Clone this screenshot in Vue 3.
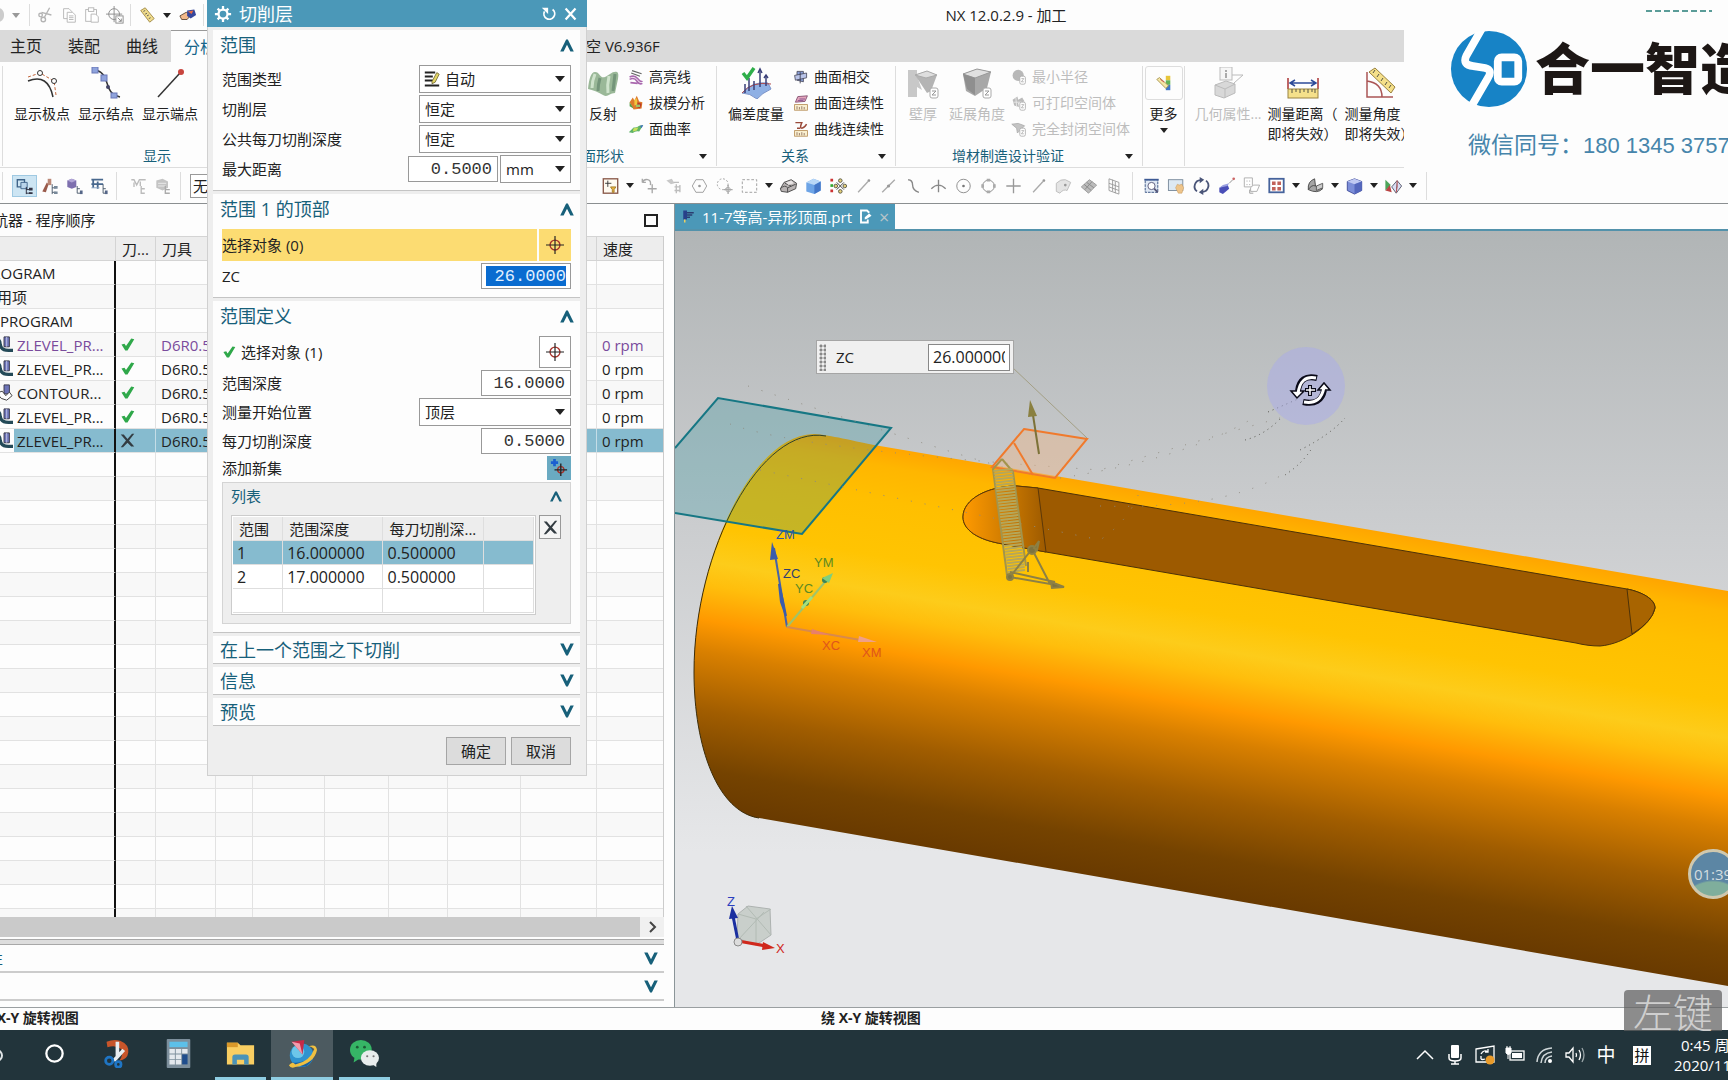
<template>
  <div class="app">
    <!-- 标题栏 -->
    <header class="title-bar">
      <div class="quick-tools">
        <span class="quick-edge"></span>
        <span class="arrow dim"></span>
        <span class="sep"></span>
        <Ic v-for="n in ['cut', 'copy', 'paste', 'snap']" :key="n" :name="n" class="q-icon" />
        <span class="sep"></span>
        <Ic name="ruler" class="q-icon" />
        <span class="arrow"></span>
        <Ic name="eraser" class="q-icon" />
        <span class="sep"></span>
      </div>
      <h1 class="app-title">NX 12.0.2.9 - 加工</h1>
    </header>

    <!-- 选项卡 -->
    <nav class="tabs">
      <button v-for="t in tabs" :key="t" class="tab" :class="{ active: t === '分析' }">{{ t }}</button>
      <button class="tab tab-last">星空 V6.936F</button>
    </nav>

    <!-- 功能区 -->
    <section class="ribbon">
      <div class="group g-show">
        <div class="tools">
          <button v-for="b in showTools" :key="b.label" class="big">
            <Ic :name="b.icon" size="32" />
            <span>{{ b.label }}</span>
          </button>
        </div>
        <div class="caption">显示</div>
      </div>
      <div class="group g-shape">
        <div class="tools tools-end">
          <button class="big big-2"><Ic name="reflect" size="32" /><span>反射</span></button>
          <div class="small-col">
            <button v-for="b in shapeTools" :key="b.label" class="small"><Ic :name="b.icon" />{{ b.label }}</button>
          </div>
        </div>
        <div class="caption cap-end">面形状<span class="arrow"></span></div>
      </div>
      <div class="group g-rel">
        <div class="tools">
          <button class="big big-4"><Ic name="deviation" size="32" /><span>偏差度量</span></button>
          <div class="small-col">
            <button v-for="b in relTools" :key="b.label" class="small"><Ic :name="b.icon" />{{ b.label }}</button>
          </div>
        </div>
        <div class="caption cap-drop">关系<span class="arrow cap-arrow"></span></div>
      </div>
      <div class="group g-add">
        <div class="tools disabled">
          <button class="big big-2" disabled><Ic name="wall" size="32" /><span>壁厚</span></button>
          <button class="big big-4" disabled><Ic name="overhang" size="32" /><span>延展角度</span></button>
          <div class="small-col">
            <button v-for="b in addTools" :key="b.label" class="small" disabled><Ic :name="b.icon" />{{ b.label }}</button>
          </div>
        </div>
        <div class="caption cap-drop">增材制造设计验证<span class="arrow cap-arrow"></span></div>
      </div>
      <div class="group g-more">
        <button class="more">
          <span class="more-box"><Ic name="gauge" /></span>
          <span>更多</span>
          <span class="arrow"></span>
        </button>
      </div>
      <div class="group g-measure">
        <div class="tools">
          <button class="big m-prop" disabled><Ic name="prop" size="32" /><span>几何属性...</span></button>
          <button class="big m-item"><Ic name="dist" size="32" /><span>测量距离（<br>即将失效）</span></button>
          <button class="big m-item"><Ic name="angle" size="32" /><span>测量角度（<br>即将失效）</span></button>
        </div>
      </div>
    </section>

    <!-- 选择条 -->
    <section class="toolbar">
      <div class="bar-left">
        <span class="sep tall"></span>
        <Ic v-for="n in ['nav1', 'nav2', 'nav3', 'nav4']" :key="n" :name="n" class="b-icon" :class="{ on: n === 'nav1' }" />
        <span class="sep tall"></span>
        <Ic v-for="n in ['nav5', 'nav6']" :key="n" :name="n" class="b-icon" />
        <span class="sep tall"></span>
        <select class="filter" aria-label="过滤器"><option>无选择过滤器</option></select>
      </div>
      <div class="bar-right">
        <template v-for="(n, i) in barIcons" :key="i">
          <span v-if="n === '|'" class="sep tall"></span>
          <span v-else-if="n === 'v'" class="drop"><span class="arrow"></span></span>
          <Ic v-else :name="n" class="b-icon" />
        </template>
      </div>
    </section>

    <main class="main">
      <!-- 工序导航器 -->
      <aside class="navigator">
        <div class="nav-title">
          <span class="nav-name">工序导航器 - 程序顺序</span>
          <button class="nav-max" aria-label="最大化"></button>
        </div>
        <div class="nav-table-wrap">
          <table class="nav-table">
            <colgroup>
              <col v-for="(w, i) in navCols" :key="i" :style="{ width: w + 'px' }">
            </colgroup>
            <thead>
              <tr><th></th><th>刀...</th><th>刀具</th><th></th><th></th><th></th><th></th><th></th><th></th><th>速度</th></tr>
            </thead>
            <tbody>
              <tr v-for="(r, i) in navRows" :key="i" :class="{ selected: r.selected, first: r.first }">
                <td class="name">
                  <span v-if="r.op" class="op"><Ic :name="r.op" class="op-icon" /><span class="op-name">{{ r.name }}</span></span>
                  <span v-else-if="r.name" :class="'lv' + r.level">{{ r.name }}</span>
                </td>
                <td class="state"><Ic v-if="r.state" :name="r.state" /></td>
                <td>{{ r.tool }}</td>
                <td></td><td></td><td></td><td></td><td></td><td></td>
                <td>{{ r.speed }}</td>
              </tr>
            </tbody>
          </table>
        </div>
        <div class="h-scroll"><span class="thumb"></span><Ic name="right" class="h-arrow" /></div>
        <div class="splitter"></div>
        <button class="nav-fold"><span class="fold-name">相关性</span><Ic name="down" class="chev" /></button>
        <button class="nav-fold"><span class="fold-name">细节</span><Ic name="down" class="chev" /></button>
      </aside>

      <!-- 图形窗口 -->
      <section class="view">
        <div class="doc-bar">
          <div class="doc-tab">
            <Ic name="doc" /><span>11-7等高-异形顶面.prt</span><Ic name="edit" /><span class="doc-close">×</span>
          </div>
        </div>
        <div class="canvas">
          <svg class="scene" viewBox="675 231 1053 776" preserveAspectRatio="xMinYMin slice">
            <defs>
              <linearGradient id="sky" x1="0" y1="0" x2="0" y2="1">
                <stop offset="0" stop-color="#b1b5b6" /><stop offset=".35" stop-color="#c9cbcd" />
                <stop offset=".8" stop-color="#e6e7e9" /><stop offset="1" stop-color="#e6e7e9" />
              </linearGradient>
              <linearGradient id="body" gradientUnits="userSpaceOnUse" x1="875" y1="445" x2="809" y2="827">
                <stop offset="0" stop-color="#ffa600" /><stop offset=".05" stop-color="#ffb600" />
                <stop offset=".14" stop-color="#ffbf00" /><stop offset=".28" stop-color="#ffc402" />
                <stop offset=".37" stop-color="#fdcc1a" /><stop offset=".43" stop-color="#ffbe0c" />
                <stop offset=".52" stop-color="#ff9900" /><stop offset=".6" stop-color="#d98000" />
                <stop offset=".75" stop-color="#a15d00" /><stop offset=".9" stop-color="#754300" />
                <stop offset="1" stop-color="#693a00" />
              </linearGradient>
              <linearGradient id="slotEnd" x1="0" y1="0" x2="1" y2="0">
                <stop offset="0" stop-color="#ff9a00" /><stop offset=".5" stop-color="#d07c00" /><stop offset="1" stop-color="#9d5a00" />
              </linearGradient>
            </defs>
            <rect x="675" y="231" width="1053" height="776" fill="url(#sky)" />
            <!-- 圆柱体 -->
            <path d="M813 434C824 434 840 438 874 445L1728 591V986L759 818C718 812 694 748 694 672C694 562 750 436 813 434Z" fill="url(#body)" />
            <path d="M826 436C761 424 694 550 694 672C694 748 718 812 759 818" fill="none" stroke="#3c2c08" />
            <!-- 键槽 -->
            <path d="M1038 488L1627 589C1642 592 1655 599 1655 608C1652 624 1625 644 1600 646C1592 646 1584 645 1576 643L1046 552L1003 544C978 540 963 530 963 517C963 499 988 486 1017 486Z" fill="#9d5a00" stroke="#4d3208" />
            <path d="M1038 488L1046 552L1003 544C978 540 963 530 963 517C963 499 988 486 1017 486Z" fill="url(#slotEnd)" stroke="#5c3808" />
            <path d="M1627 589L1632 634Q1652 622 1655 608C1655 599 1642 592 1627 589Z" fill="#a86400" stroke="#4d3208" />
            <!-- 顶部平面 -->
            <path d="M675 448L718 398L891 428L802 534L675 513Z" fill="#108a98" fill-opacity=".24" />
            <path d="M675 448L718 398L891 428L802 534L675 513" fill="none" stroke="#167784" stroke-width="2" />
            <!-- 移动轨迹 -->
            <g fill="none" stroke="#8f8b80" stroke-width="1" stroke-dasharray="1 13">
              <path d="M748 386Q1000 470 1040 476" /><path d="M730 424Q800 450 1100 470Q1200 440 1280 418" />
              <path d="M1060 478Q1180 460 1250 420" /><path d="M760 470L1100 540Q1130 520 1140 490" />
              <path d="M1100 506Q1230 510 1290 470" />
            </g>
            <g fill="none" stroke="#55554e" stroke-dasharray="1 4">
              <path d="M1245 440Q1265 435 1282 417" /><path d="M1300 450Q1330 435 1345 418" /><path d="M1285 475Q1303 463 1312 448" />
              <path d="M1268 412L1298 399" />
            </g>
            <!-- 范围平面 -->
            <path d="M1024 429L1087 439L1055 478L992 467Z" fill="#e8b890" fill-opacity=".5" stroke="#f07a2c" stroke-width="2" />
            <path d="M1014 443L1033 475" stroke="#f07a2c" stroke-width="2" />
            <path d="M1012 367L1087 438" stroke="#a39f85" />
            <path d="M1039 454L1033 415" stroke="#7c7238" stroke-width="2" /><path d="M1030 400L1037 416L1028 417Z" fill="#8a8040" />
            <!-- 深度手柄 -->
            <path d="M1002 459L993 469L1007 575M1002 459L1013 472L1026 566" fill="none" stroke="#a2944c" stroke-width="2" />
            <path v-for="k in 36" :key="k" :d="hatch(k)" stroke="#b5a75a" stroke-width="2" />
            <g stroke="#8d8044" stroke-width="2" fill="#7d7340">
              <path d="M1010 577L1032 549L1050 584L1010 577M1010 572L1055 582M1028 572V562" fill="none" />
              <circle cx="1010" cy="577" r="3" /><circle cx="1032" cy="550" r="4" />
              <path d="M1034 548L1039 541L1037 550Z" /><path d="M1051 582L1064 587L1052 588Z" />
            </g>
            <!-- 坐标系 -->
            <g fill="none" stroke-width="2">
              <path d="M787 627L774 548" stroke="#4762a8" /><path d="M787 627L830 576" stroke="#9fc46a" />
              <path d="M787 627L866 641" stroke="#d88a4c" />
            </g>
            <path d="M772 542L778 559L770 560Z" fill="#3b5cab" /><path d="M779 584L783 601L786 616L781 602Z" fill="#3b5cab" stroke="#3b5cab" stroke-width="2" />
            <circle cx="825" cy="580" r="3" fill="#3c8358" /><circle cx="806" cy="603" r="3" fill="#3c8358" />
            <path d="M833 573L829 583L822 578Z" fill="#7fcf7c" /><path d="M812 597L802 608" stroke="#a5df7c" stroke-width="3" />
            <path d="M877 642L859 636L858 642Z" fill="#f0a088" /><path d="M830 635L812 629L811 634Z" fill="#e8806a" />
            <g class="axis">
              <text x="776" y="539" fill="#2b58a8">ZM</text><text x="783" y="578" fill="#31406e">ZC</text>
              <text x="814" y="567" fill="#5d8a22">YM</text><text x="795" y="593" fill="#5d8a22">YC</text>
              <text x="822" y="650" fill="#e0551c">XC</text><text x="862" y="657" fill="#e0551c">XM</text>
            </g>
            <!-- 视图三重轴 -->
            <path d="M748 906L770 909L771 935L756 945L737 938L738 914Z" fill="#c9cfcb" stroke="#adb2b0" />
            <path d="M738 914L756 919L771 909M756 919V945M738 940L764 912M746 906L771 935" fill="none" stroke="#b2bbb4" />
            <path d="M738 941L733 916" stroke="#1a2fa0" stroke-width="3" /><path d="M732 906L738 918L729 919Z" fill="#1a2fa0" />
            <path d="M738 941L766 946" stroke="#d0281c" stroke-width="3" /><path d="M775 948L763 942L762 950Z" fill="#d0281c" />
            <circle cx="738" cy="942" r="4" fill="#dcdcdc" stroke="#8a8a8a" />
            <g class="axis"><text x="727" y="906" fill="#2b3fc0">Z</text><text x="776" y="953" fill="#d0281c">X</text></g>
            <!-- 旋转光标 -->
            <circle cx="1306" cy="386" r="39" fill="#a9acea" fill-opacity=".5" />
            <g fill="none">
              <path d="M1317 378Q1300 374 1298 391M1303 402Q1321 406 1324 390" stroke="#0a0a18" stroke-width="6" />
              <path d="M1291 391H1304L1297 398ZM1318 390H1330L1324 383Z" fill="#fff" stroke="#0a0a18" stroke-width="1.5" />
              <path d="M1310 385V396M1305 390H1316" stroke="#0a0a18" stroke-width="4" />
              <path d="M1316 378Q1300 375 1298 394M1304 402Q1321 405 1324 387" stroke="#fff" stroke-width="3" />
              <path d="M1310 386V395M1306 390H1315" stroke="#fff" stroke-width="1.5" />
            </g>
          </svg>
          <div class="float-input">
            <span class="grip"></span>
            <label for="zcFloat">ZC</label>
            <input id="zcFloat" v-model="zcFloat">
          </div>
          <div class="timer"><span>01:39</span></div>
          <div class="key-hint">左键</div>
        </div>
      </section>
    </main>

    <footer class="status">
      <span class="status-left">绕 X-Y 旋转视图</span>
      <span>绕 X-Y 旋转视图</span>
    </footer>

    <!-- 任务栏 -->
    <footer class="taskbar">
      <span class="task-edge"></span>
      <button v-for="t in tasks" :key="t.icon" class="task" :class="t.cls" :aria-label="t.label"><Ic :name="t.icon" size="32" /></button>
      <div class="tray">
        <Ic v-for="n in ['tUp', 'tMic', 'tSync', 'tPower', 'tWifi', 'tSound']" :key="n" :name="n" class="tray-icon" />
        <span class="ime">中</span>
        <span class="pin">拼</span>
        <div class="clock"><span class="time">0:45 周日</span><span>2020/11/1</span></div>
      </div>
    </footer>

    <!-- 水印 -->
    <div class="brand">
      <span class="brand-dash"></span>
      <div class="brand-row">
        <svg viewBox="0 0 80 80" class="brand-logo">
          <circle cx="40" cy="40" r="39" fill="#1783c6" />
          <path d="M33 -2L17 26Q12 36 24 37L36 39Q44 41 39 49L21 80" fill="none" stroke="#fff" stroke-width="8" />
          <rect x="49" y="28" width="21" height="25" rx="4" fill="none" stroke="#fff" stroke-width="8" />
        </svg>
        <span class="brand-name">合一智造</span>
      </div>
      <div class="brand-tel">微信同号：<span>180 1345 3757</span></div>
    </div>

    <!-- 切削层对话框 -->
    <form class="dialog" @submit.prevent>
      <div class="dlg-title">
        <Ic name="gear" /><h2>切削层</h2>
        <button type="button" aria-label="重置"><Ic name="reset" /></button>
        <button type="button" aria-label="关闭"><Ic name="close" /></button>
      </div>

      <section class="panel">
        <div class="panel-head"><h3>范围</h3><Ic name="up" class="chev" /></div>
        <div class="row row-30">
          <label for="rangeType">范围类型</label>
          <span class="combo wide with-icon"><Ic name="auto" class="combo-icon" /><select id="rangeType"><option>自动</option></select></span>
        </div>
        <div class="row row-30">
          <label for="cutLevel">切削层</label>
          <span class="combo wide"><select id="cutLevel"><option>恒定</option></select></span>
        </div>
        <div class="row row-30">
          <label for="common">公共每刀切削深度</label>
          <span class="combo wide"><select id="common"><option>恒定</option></select></span>
        </div>
        <div class="row row-30">
          <label for="maxDist">最大距离</label>
          <input id="maxDist" v-model="maxDist" class="num">
          <span class="combo unit"><select aria-label="单位"><option>mm</option></select></span>
        </div>
      </section>

      <section class="panel">
        <div class="panel-head"><h3>范围 1 的顶部</h3><Ic name="up" class="chev" /></div>
        <div class="row pick-row">
          <span class="pick-name">选择对象 (0)</span>
          <button type="button" class="pick" aria-label="选择点"><Ic name="target" /></button>
        </div>
        <div class="row row-30">
          <label for="zc">ZC</label>
          <input id="zc" v-model="zc" class="num picked">
        </div>
      </section>

      <section class="panel">
        <div class="panel-head"><h3>范围定义</h3><Ic name="up" class="chev" /></div>
        <div class="row row-34">
          <span class="checked"><Ic name="ok" />选择对象 (1)</span>
          <button type="button" class="pick boxed" aria-label="选择点"><Ic name="target" /></button>
        </div>
        <div class="row row-28">
          <label for="depth">范围深度</label>
          <input id="depth" v-model="depth" class="num">
        </div>
        <div class="row row-30">
          <label for="start">测量开始位置</label>
          <span class="combo wide"><select id="start"><option>顶层</option></select></span>
        </div>
        <div class="row row-28">
          <label for="perCut">每刀切削深度</label>
          <input id="perCut" v-model="perCut" class="num">
        </div>
        <div class="row row-26">
          <span>添加新集</span>
          <button type="button" class="add" aria-label="添加新集"><Ic name="addset" /></button>
        </div>
        <div class="list-box">
          <div class="list-head"><h4>列表</h4><Ic name="up2" class="chev" /></div>
          <div class="list-body">
            <div class="list-frame">
              <table class="list-table">
                <thead><tr><th>范围</th><th>范围深度</th><th>每刀切削深...</th><th></th></tr></thead>
                <tbody>
                  <tr v-for="r in ranges" :key="r.id" :class="{ selected: r.id === current }" @click="current = r.id">
                    <td>{{ r.id }}</td><td>{{ r.depth }}</td><td>{{ r.cut }}</td><td></td>
                  </tr>
                  <tr><td></td><td></td><td></td><td></td></tr>
                </tbody>
              </table>
            </div>
            <button type="button" class="del" aria-label="移除"><Ic name="bad" /></button>
          </div>
        </div>
      </section>

      <section v-for="f in folds" :key="f" class="panel fold">
        <div class="panel-head"><h3>{{ f }}</h3><Ic name="down" class="chev" /></div>
      </section>

      <div class="actions">
        <button type="submit">确定</button>
        <button type="button">取消</button>
      </div>
    </form>
  </div>
</template>

<script setup>
import { ref, h } from 'vue'

// 小图标使用 20x20 画布，大图标使用 32x32 画布
const icons = {
  cut: '<g fill="none" stroke="#b4b4b4" stroke-width="1.5"><path d="M14 2L8 13M5 7L16 10"/><circle cx="7" cy="15" r="2.5"/><circle cx="4" cy="10" r="2"/></g>',
  copy: '<g fill="#fff" stroke="#b4b4b4"><path d="M4 3h6l3 3v8H4z"/><path d="M8 7h6l3 3v8H8z"/><path d="M10 11h5M10 13h5M10 15h5"/></g>',
  paste: '<g fill="#fff" stroke="#b4b4b4"><rect x="3" y="4" width="12" height="13"/><rect x="6" y="2" width="6" height="4"/><path d="M9 9h5l3 3v6H9z"/></g>',
  snap: '<g fill="none" stroke="#888"><circle cx="9" cy="9" r="6"/><path d="M9 0v18M0 9h18"/><rect x="11" y="11" width="8" height="8" fill="#fff"/><path d="M13 13l4 4m0-3v3h-3"/></g>',
  ruler: '<path d="M3 5L8 2L18 14L13 18Z" fill="#f0dc8c" stroke="#a08a48"/><path d="M6 6l2-1M8 9l2-1M10 11l2-1M12 14l2-1" stroke="#555"/>',
  eraser: '<path d="M1 11L8 7L14 9L9 15L3 15Z" fill="#f3b98a" stroke="#5a4636"/><path d="M9 5L17 4L19 10L13 14L9 11Z" fill="#37479c"/><path d="M10 6L16 5L14 9Z" fill="#e86b42"/>',
  poles: '<g fill="none" stroke="#333"><path d="M2 14Q22 6 27 30" stroke-width="1.5"/><path d="M2 10L14 6L28 14L30 28" stroke="#c2653a" stroke-dasharray="3 2"/><circle cx="14" cy="6" r="2.5" fill="#fff"/><circle cx="28" cy="14" r="2.5" fill="#fff"/></g>',
  knots: '<path d="M6 3C22 8 12 26 30 30" fill="none" stroke="#333" stroke-width="1.5"/><g fill="#8fa3dc" stroke="#6a78b8"><rect x="2" y="0" width="6" height="6"/><rect x="11" y="8" width="6" height="6"/><rect x="21" y="26" width="6" height="5"/></g><circle cx="18" cy="20" r="2" fill="#446"/>',
  ends: '<path d="M4 30L26 6" stroke="#333" stroke-width="1.5"/><circle cx="27" cy="5" r="3" fill="#c8453e"/>',
  reflect: '<path d="M1 22C2 12 4 5 8 5C13 5 13 12 18 10C23 8 25 4 30 5Q32 6 31 12L28 26C22 26 21 31 16 28S6 23 1 22Z" fill="#9ab898"/><path d="M8 7Q5 14 5 21M22 9Q20 18 21 26" fill="none" stroke="#cfe3cc" stroke-width="3"/><path d="M13 11Q11 18 11 24M28 7L26 24" fill="none" stroke="#74957a" stroke-width="3"/>',
  hi: '<path d="M5 2L17 6M4 5L15 9" stroke="#666" stroke-width="1.500"/><path d="M2 10Q8 7 12 12T18 15M2 13Q8 10 11 15T18 18M3 17L12 18" fill="none" stroke="#a968ae" stroke-width="2"/>',
  draft: '<path d="M2 9L6 3L8 7L11 1L14 8L18 9L17 17L7 18Z" fill="#dd7a2c"/><path d="M2 9L7 17L2 14Z" fill="#4f9a44"/><path d="M8 6L11 4L12 12L8 13Z" fill="#f2c53c"/><path d="M12 9L17 11L15 17L11 15Z" fill="#b8392c"/><path d="M10 12h5v3h-5z" fill="#9bc46c"/>',
  curv: '<path d="M1 14L7 8Q11 9 14 6L19 5L14 13Q9 12 6 15Z" fill="#5fb368"/><path d="M7 9L13 8L11 12L6 13Z" fill="#c8e05a"/><path d="M15 6L19 5L17 9Z" fill="#3d6fc0"/>',
  deviation: '<path d="M2 26Q12 14 28 16L31 22Q22 26 17 32Q10 26 2 26Z" fill="#8fb0e4" stroke="#7a92c8"/><path d="M2 26Q12 14 31 17" fill="none" stroke="#b04a4a"/><path d="M9 24V11M14 23V14M20 20V3M26 19V9M5 26V17" stroke="#3a3f78" stroke-width="1.500"/><path d="M18 6L20 2L22 6M24 11L26 8L28 11" fill="none" stroke="#3a3f78" stroke-width="1.500"/><path d="M3 6L7 11L14 1" fill="none" stroke="#2fae4a" stroke-width="3.500"/>',
  inter: '<path d="M5 3H13V16L5 14Z" fill="#8ba0d8" stroke="#445"/><path d="M2 8L17 5V11L3 14Z" fill="#b9c4e8" stroke="#445"/><path d="M9 4V18" stroke="#334"/>',
  cont: '<path d="M6 2L18 1L15 8L3 9Z" fill="#e3a5bb" stroke="#746"/><path d="M8 5h7M6 7h7" stroke="#748"/><rect x="2" y="12" width="16" height="7" fill="#f9efcf" stroke="#b58a50"/><path d="M5 14v4M8 15v3M11 14v4M14 15v3" stroke="#865"/>',
  cont2: '<path d="M3 2H11Q8 9 11 9T17 4M9 9H5" fill="none" stroke="#9a4a3a" stroke-width="1.800"/><rect x="2" y="12" width="16" height="7" fill="#f9efcf" stroke="#b58a50"/><path d="M5 14v4M8 15v3M11 14v4M14 15v3" stroke="#865"/>',
  wall: '<path d="M1 3h9v6l5 14-5-3v10H1z" fill="#c8c8c8"/><path d="M8 8L20 4L30 8L24 24L20 26Z" fill="#b4b4b4"/><path d="M8 8L20 4L30 8L19 11Z" fill="#dedede" stroke="#aaa"/><rect x="23" y="21" width="8" height="10" rx="2" fill="#fff" stroke="#aaa"/><path d="M25 24h4l-4 4h4" fill="none" stroke="#999"/>',
  overhang: '<path d="M2 7L16 2L30 5L26 21L14 29L5 24Z" fill="#a8a8a8"/><path d="M2 7L16 2L30 5L14 11Z" fill="#e0e0e0" stroke="#999"/><path d="M2 7L14 11L14 28L6 22Z" fill="#8f8f8f"/><rect x="22" y="21" width="8" height="10" rx="2" fill="#fff" stroke="#aaa"/><path d="M24 24h4l-4 4h4" fill="none" stroke="#999"/>',
  radius: '<circle cx="9" cy="8" r="7" fill="#b8b8b8"/><rect x="11" y="9" width="7" height="10" rx="2" fill="#fff" stroke="#aaa"/><path d="M13 12h3l-3 4h3" fill="none" stroke="#aaa"/>',
  space: '<path d="M2 6L8 2L9 6L14 3L17 8L9 10L10 15L4 13Z" fill="#bbb"/><path d="M6 3L7 14M3 9H14" stroke="#eee"/><rect x="11" y="9" width="7" height="10" rx="2" fill="#fff" stroke="#aaa"/><path d="M13 12h3l-3 4h3" fill="none" stroke="#aaa"/>',
  closed: '<path d="M1 4L9 3L17 6L13 10L8 15L7 9Z" fill="#c4c4c4" stroke="#aaa"/><rect x="11" y="9" width="7" height="10" rx="2" fill="#fff" stroke="#aaa"/><path d="M13 12h3l-3 4h3" fill="none" stroke="#aaa"/>',
  gauge: '<path d="M12 2h5v5h-5z" fill="#e8c63a"/><path d="M12 7h5v5h-5z" fill="#62b356"/><path d="M12 12h5v6h-5z" fill="#3f77c8"/><path d="M2 6L5 4L15 13L12 16Z" fill="#f5e7a8" stroke="#a89550"/><path d="M6 6l4 3" stroke="#c44"/>',
  prop: '<rect x="8" y="0" width="12" height="13" fill="#f6f6f6" stroke="#bbb"/><path d="M14 3v2M14 6v5" stroke="#aaa" stroke-width="2"/><path d="M3 18L14 14L23 17L23 26L12 31L3 28Z" fill="#d8d8d8" stroke="#bbb"/><path d="M3 18L13 22L23 17M13 22V31" fill="none" stroke="#bbb"/><path d="M20 8h11L22 16" fill="none" stroke="#bbb"/>',
  dist: '<path d="M1 11V22M31 11V22" stroke="#a33" stroke-width="1.500"/><path d="M4 16H28M8 13L3 16L8 19M24 13L29 16L24 19" stroke="#2c4a98" stroke-width="1.500" fill="none"/><rect x="1" y="22" width="30" height="9" fill="#f5e08a" stroke="#9a8340"/><path d="M5 22v4M9 22v3M13 22v4M17 22v3M21 22v4M25 22v3M28 22v4" stroke="#554"/>',
  angle: '<path d="M3 5V30H29M3 14Q18 16 18 30" fill="none" stroke="#a55" stroke-width="1.500"/><path d="M5 5L11 1L31 20L27 26Z" fill="#f5e08a" stroke="#9a8340"/><path d="M11 3l-2 3M15 7l-2 3M19 11l-2 3M23 15l-2 3M27 18l-2 3" stroke="#554"/>',
  nav1: '<path d="M2 3h8v8H2z" fill="none" stroke="#3d6288" stroke-width="1.500"/><path d="M6 6h7v7H6z" fill="#b9d4ea" stroke="#3d6288"/><path d="M12 11v8M12 14h4M12 18h5" stroke="#223"/><path d="M15 12h4v3h-4zM15 17h4v2h-4z" fill="#334"/>',
  nav2: '<path d="M2 16L7 6L9 8L6 17Z" fill="#9a5b4c"/><path d="M8 2h4v7H8z" fill="#b87"/><path d="M13 8v11M13 12h4M13 17h4" stroke="#456"/><path d="M15 10h4v3h-4zM15 16h4v3h-4z" fill="#789"/>',
  nav3: '<path d="M2 4l5-2 5 2v7l-5 2-5-2z" fill="#7d6fae"/><path d="M2 4l5 2 5-2-5-2z" fill="#b1a5d6"/><path d="M13 10v8h4M13 13h3" fill="none" stroke="#456"/><path d="M16 15h3v4h-3z" fill="#568"/>',
  nav4: '<path d="M1 3h13M1 8h13M3 2v10M8 5v8" stroke="#48688e" stroke-width="2"/><path d="M1 12h9" stroke="#7f9dc0"/><path d="M14 8v10h4M14 13h3" fill="none" stroke="#456"/><path d="M16 15h3v4h-3z" fill="#568"/>',
  nav5: '<path d="M2 3h3l3 6 3-6h3M5 6v5M12 5v5M14 3h4" fill="none" stroke="#bbb" stroke-width="1.500"/><path d="M13 10v8h4M13 13h4" fill="none" stroke="#bbb" stroke-width="1.500"/>',
  nav6: '<path d="M2 4l7-2 6 3v7l-6 3-7-3z" fill="#c4c4c4"/><path d="M4 7h9M4 10h8" stroke="#eee"/><path d="M12 10v8h5M12 14h5" fill="none" stroke="#aaa" stroke-width="1.500"/>',
  snapbox: '<rect x="2" y="2" width="16" height="16" fill="#fffaf0" stroke="#8a5a4a" stroke-width="1.500"/><path d="M7 4v7M4 7h7" stroke="#333"/><path d="M10 11h6l-2 3v3h-2v-3z" fill="#e8b13c" stroke="#a27a28"/>',
  undo: '<path d="M2 6q2-4 6-3t3 6M2 6V2M2 6h4M13 8v10M8 13h10" fill="none" stroke="#a8a8a8" stroke-width="1.500"/>',
  block: '<path d="M1 4l6-2 3 5-4 1z" fill="#c8c8c8"/><path d="M9 6h6M12 8v10M10 11h6M16 9v8M10 15h6" stroke="#bdbdbd" stroke-width="1.500"/>',
  hex: '<path d="M6 3h8l4 7-4 7H6l-4-7z" fill="none" stroke="#999"/><circle cx="10" cy="10" r="1.500" fill="#999"/>',
  dotc: '<circle cx="8" cy="8" r="6" fill="none" stroke="#999" stroke-dasharray="2 2"/><path d="M14 9v10M9 14h10" stroke="#aaa" stroke-width="1.500"/><circle cx="14" cy="14" r="2.500" fill="none" stroke="#aaa"/>',
  lasso: '<rect x="2" y="3" width="16" height="14" fill="none" stroke="#999" stroke-dasharray="3 2"/>',
  solid: '<path d="M1 13l4-7 8-3 6 4-1 6-9 4-7-1z" fill="#b9b4b4" stroke="#444"/><path d="M1 13Q6 8 9 12L9 17M9 12L18 8M6 7L13 10" fill="none" stroke="#444"/><path d="M7 6l6-2 3 3-6 2z" fill="#e8e4e4"/>',
  cube: '<path d="M2 6l8-4 8 3v10l-7 4-9-3z" fill="#6da4e6"/><path d="M2 6l9 3 7-4-8-3z" fill="#b8d7f7"/><path d="M11 9v10l7-4V5z" fill="#4377c8"/>',
  pts: '<path d="M1 2h3v3H1zM1 14h3v3H1z" fill="#c33"/><path d="M1 8h3v3H1z" fill="#3a3"/><path d="M8 6l8 8M16 6l-8 8" stroke="#333"/><g fill="#e8d27a" stroke="#554"><circle cx="12" cy="4" r="2"/><circle cx="12" cy="16" r="2"/><circle cx="7" cy="10" r="2"/><circle cx="17" cy="10" r="2"/></g>',
  line: '<path d="M4 17L15 5" stroke="#aaa" stroke-width="1.500"/><circle cx="16" cy="4" r="1.500" fill="#999"/>',
  mid: '<path d="M3 17L17 3" stroke="#aaa" stroke-width="1.500"/><circle cx="10" cy="10" r="1.800" fill="#999"/>',
  scurve: '<path d="M4 3q5 0 5 6t7 8" fill="none" stroke="#888" stroke-width="1.500"/>',
  arcx: '<path d="M2 13q8-8 16 0M10 3v14" fill="none" stroke="#888" stroke-width="1.500"/>',
  cdot: '<circle cx="10" cy="10" r="7.500" fill="none" stroke="#888"/><circle cx="10" cy="10" r="1.500" fill="#777"/>',
  cquad: '<circle cx="10" cy="10" r="6.500" fill="none" stroke="#888"/><path d="M8 2h4v3H8zM8 15h4v3H8zM2 8h3v4H2zM15 8h3v4h-3z" fill="#aaa"/>',
  plus: '<path d="M10 2v16M2 10h16" stroke="#999" stroke-width="1.500"/>',
  face: '<path d="M2 7q5-5 10-4l6 3-4 9q-4-2-8 3l-4-2z" fill="#e4e4e4" stroke="#bbb"/><circle cx="12" cy="9" r="1.500" fill="#999"/>',
  mesh: '<path d="M2 11l9-8 8 6-9 9z" fill="#bbb" stroke="#999"/><path d="M5 8l8 7M8 6l8 6M6 14l8-9" stroke="#888"/>',
  grid: '<path d="M5 2l11 4v13L5 15zM5 7l11 4M5 11l11 4M9 3v13M12 5v13" fill="none" stroke="#999"/>',
  fit: '<rect x="3" y="3" width="14" height="14" fill="#dfe8f4" stroke="#2e4a7c" stroke-dasharray="3 1"/><circle cx="10" cy="10" r="4" fill="#fff" stroke="#557"/><path d="M13 13l4 4" stroke="#557" stroke-width="2"/><path d="M2 3h16" stroke="#3d5a94" stroke-width="2"/>',
  pan: '<rect x="1" y="3" width="16" height="12" fill="#dde9f4" stroke="#789"/><path d="M9 12l2-4 2 1 3-1 2 4-2 6h-4z" fill="#eec48a" stroke="#c09050" stroke-width=".5"/>',
  rot: '<path d="M5 16a7 7 0 0 1 4-12.500M15 4a7 7 0 0 1-4 12.500" fill="none" stroke="#4a5578" stroke-width="2"/><path d="M8 0l5 3-5 4zM12 20l-5-3 5-4z" fill="#4a5578"/>',
  persp: '<path d="M2 12l9-4 2 5-7 6-4-2z" fill="#4a4fb8"/><path d="M2 12l4-3 7-2-2 3z" fill="#9aa0e0"/><path d="M13 7l4-4" stroke="#888"/><circle cx="18" cy="2" r="1.500" fill="#c66"/>',
  sheets: '<g fill="#fff" stroke="#aaa"><path d="M2 1h9v10H2z"/><path d="M9 12l3-3h7l-3 7H9z"/></g><path d="M5 4v1M8 4v1M5 8v1M8 8v1M8 14v4h4" stroke="#999" fill="none"/>',
  layout: '<rect x="2" y="2" width="16" height="15" fill="#fff" stroke="#46639c" stroke-width="2"/><path d="M5 5h4v4H5zM11 5h4v4h-4zM5 11h4v4H5zM11 11h4v4h-4z" fill="#c2625a"/>',
  shade: '<path d="M2 14q-1-9 7-12l1 8 8 3q-6 6-16 1z" fill="#a5a5a5" stroke="#444"/><path d="M2 14q4-6 8-4" fill="none" stroke="#444"/><path d="M11 10l7-3v5l-7 3z" fill="#ccc" stroke="#555"/>',
  box: '<path d="M2 5l8-3 8 3v10l-8 4-8-4z" fill="#7c8ed8" stroke="#3c4a98"/><path d="M2 5l8 3 8-3-8-3z" fill="#c0c9f2"/><path d="M10 8v11l8-4V5z" fill="#5467bd"/>',
  clip: '<path d="M1 3l6 6-6 6z" fill="#4ca55a"/><path d="M1 15l5-6 2 8z" fill="#b44"/><path d="M14 4l5 6-6 8-5-7z" fill="#d9dff5" stroke="#556"/><path d="M14 4v7l-1 6" stroke="#b44"/>',
  gear: '<circle cx="10" cy="10" r="5" fill="none" stroke="#fff" stroke-width="2.500"/><path d="M10 1v4M10 15v4M1 10h4M15 10h4M4 4l2 2M14 14l2 2M16 4l-2 2M6 14l-2 2" stroke="#fff" stroke-width="2.500"/>',
  reset: '<path d="M14 5A6 6 0 1 1 5 7" fill="none" stroke="#fff" stroke-width="2"/><path d="M2 3h7v7z" fill="#fff"/>',
  close: '<path d="M4 4l11 12M15 4L4 16" stroke="#fff" stroke-width="2.500"/>',
  up: '<path d="M2 17L9 3H11L18 17H14L10 9L6 17Z" fill="#17607a"/>',
  up2: '<path d="M3 16L9 4H11L17 16H14L10 8L6 16Z" fill="#17607a"/>',
  down: '<path d="M2 3L9 17H11L18 3H14L10 11L6 3Z" fill="#17607a"/>',
  right: '<path d="M8 5l5 5-5 5" fill="none" stroke="#444" stroke-width="2"/>',
  auto: '<path d="M1 2h13M1 7h10M1 12h10M1 18h18" stroke="#222" stroke-width="2.500"/><path d="M10 13L16 2L19 4L14 14L10 16Z" fill="#e2d564" stroke="#6a6130"/>',
  target: '<circle cx="10" cy="10" r="5.500" fill="none" stroke="#a8322a" stroke-width="1.500"/><path d="M10 0V20M0 10H20" stroke="#222" stroke-width="1.300"/>',
  ok: '<path d="M2 10L6 9L8 12L15 2L19 3L10 18H7Z" fill="#2fa84a"/>',
  bad: '<path d="M1 2H5L10 8L16 1H19L12 10L19 18H15L10 13L4 19H1L8 10Z" fill="#333c42"/>',
  addset: '<path d="M5 0v8M1 4h8" stroke="#1b5fd0" stroke-width="3"/><circle cx="12" cy="12" r="3.500" fill="none" stroke="#a8322a" stroke-width="1.500"/><path d="M12 5v14M5 12h14" stroke="#222" stroke-width="1.500"/>',
  opz: '<path d="M10 1h6v11h-6z" fill="#6d74b8" stroke="#334"/><path d="M13 1v11" stroke="#c5c9ea"/><path d="M2 4q4 0 4 6 1 6 9 6h5" fill="none" stroke="#244a58" stroke-width="3.500"/>',
  opc: '<path d="M10 1h6v10h-6z" fill="#6d74b8" stroke="#334"/><path d="M2 10l6-2 4 5 4-4 3 4-6 5-6-2z" fill="#fff" stroke="#333"/>',
  doc: '<path d="M3 2h5v12H3z" fill="#27408a"/><path d="M5 14v4" stroke="#eed060" stroke-width="2"/><path d="M8 5h9M8 8h7M8 11h4" stroke="#2b3d70" stroke-width="2"/>',
  edit: '<path d="M13 14v4H4V2h8l3 3" fill="none" stroke="#fff" stroke-width="2.500"/><path d="M9 11l6-5 3 3-6 4-3 1z" fill="#fff"/>',
  cortana: '<circle cx="16" cy="16" r="9" fill="none" stroke="#fff" stroke-width="2.500"/>',
  snip: '<path d="M5 3Q13 0 20 2Q30 6 29 15Q28 23 19 24Q24 18 21 11Q15 6 6 9Z" fill="#c8552a"/><path d="M17 3V20M24 12L13 24" stroke="#e8edf0" stroke-width="4"/><circle cx="8" cy="24" r="4" fill="none" stroke="#1f75c4" stroke-width="3"/><circle cx="18" cy="28" r="3" fill="none" stroke="#1f75c4" stroke-width="3"/>',
  calc: '<rect x="3" y="0" width="26" height="32" rx="1" fill="#7d8f9c"/><rect x="6" y="3" width="20" height="6" fill="#5cc0ea"/><path d="M6 11h6v5H6zM13 11h6v5h-6zM20 11h6v5h-6zM6 17h6v5H6zM13 17h6v5h-6zM6 23h6v5H6zM13 23h6v5h-6z" fill="#e4e9ee"/><path d="M20 17h6v11h-6z" fill="#1f4d8c"/>',
  folder: '<path d="M1 4h12l3 3h15v21H1z" fill="#f9ce62"/><path d="M1 4h12v5H1z" fill="#d9982a"/><path d="M7 28v-8q0-3 3-3h12q3 0 3 3v8h-5v-5h-8v5z" fill="#4b93b8"/>',
  nx: '<circle cx="15" cy="18" r="13" fill="#2f93cf"/><circle cx="11" cy="14" r="7" fill="#6cc6ea"/><path d="M5 26Q12 32 20 30Q27 26 28 18Q16 28 5 26Z" fill="#1b5f9e"/><path d="M1 29Q5 24 8 28Q24 25 29 11Q26 8 23 8Q31 5 32 12Q29 27 8 31Q3 33 1 29Z" fill="#f0c040"/><path d="M4 3L18 1L16 17Z" fill="#c72a48"/><path d="M4 3L13 5L16 17Z" fill="#f09cae"/>',
  wechat: '<ellipse cx="12" cy="12" rx="12" ry="11" fill="#36b566"/><path d="M5 20l-1 6 6-4z" fill="#36b566"/><ellipse cx="22" cy="21" rx="10" ry="8.500" fill="#e9eded"/><path d="M25 28l4 3v-5z" fill="#e9eded"/><g fill="#1c5a35"><circle cx="8" cy="9" r="1.500"/><circle cx="16" cy="9" r="1.500"/></g><g fill="#777"><circle cx="19" cy="19" r="1.200"/><circle cx="26" cy="19" r="1.200"/></g>',
  tUp: '<path d="M2 14l8-8 8 8" fill="none" stroke="#fff" stroke-width="1.500"/>',
  tMic: '<rect x="6" y="0" width="8" height="13" rx="1" fill="#fff"/><path d="M4 9v4q0 3 6 3t6-3V9M10 16v3M6 19h8" fill="none" stroke="#fff" stroke-width="1.500"/>',
  tSync: '<path d="M1 4L19 1V17H1Z" fill="none" stroke="#fff" stroke-width="1.300"/><path d="M6 9q3-5 7-2M13 4v3h-3M6 14q1 1 4 0M6 11v3" fill="none" stroke="#fff" stroke-width="1.300"/><circle cx="15" cy="15" r="4.500" fill="#e99b2a"/>',
  tPower: '<rect x="5" y="6" width="14" height="9" fill="none" stroke="#fff" stroke-width="1.300"/><path d="M7 8h10v5H7z" fill="#fff"/><path d="M1 3h5v5q-3 3-5 0zM3 9v5M2 1v2M5 1v2" stroke="#fff" fill="#fff"/>',
  tWifi: '<g fill="none" stroke="#cfd6d8" stroke-width="1.500"><path d="M2 17Q3 4 17 3"/><path d="M6 18Q7 8 17 7"/><path d="M10 18Q10 12 17 11"/></g><circle cx="15" cy="16" r="2" fill="#fff"/>',
  tSound: '<path d="M1 8h3l4-5v14l-4-5H1z" fill="none" stroke="#fff" stroke-width="1.300"/><g fill="none" stroke="#fff" stroke-width="1.300"><path d="M11 8q1 2 0 4"/><path d="M14 5q3 5 0 10"/><path d="M17 3q4 7 0 14" stroke="#9aa5a8"/></g>'
}

const Ic = (props) => h('svg', {
  viewBox: `0 0 ${props.size || 20} ${props.size || 20}`,
  class: props.size ? 'ic-lg' : 'ic-sm',
  innerHTML: icons[props.name]
})
Ic.props = ['name', 'size']

const tabs = ['主页', '装配', '曲线', '分析']

const showTools = [
  { icon: 'poles', label: '显示极点' },
  { icon: 'knots', label: '显示结点' },
  { icon: 'ends', label: '显示端点' }
]
const shapeTools = [
  { icon: 'hi', label: '高亮线' },
  { icon: 'draft', label: '拔模分析' },
  { icon: 'curv', label: '面曲率' }
]
const relTools = [
  { icon: 'inter', label: '曲面相交' },
  { icon: 'cont', label: '曲面连续性' },
  { icon: 'cont2', label: '曲线连续性' }
]
const addTools = [
  { icon: 'radius', label: '最小半径' },
  { icon: 'space', label: '可打印空间体' },
  { icon: 'closed', label: '完全封闭空间体' }
]

// v 表示下拉箭头，| 表示分隔线
const barIcons = [
  'snapbox', 'v', 'undo', 'block', 'hex', 'dotc', 'lasso', 'v',
  'solid', 'cube', 'pts', 'line', 'mid', 'scurve', 'arcx', 'cdot', 'cquad', 'plus', 'line', 'face', 'mesh', 'grid', '|',
  'fit', 'pan', 'rot', 'persp', 'sheets', 'layout', 'v', 'shade', 'v', 'box', 'v', 'clip', 'v', '|'
]

const navCols = [116, 40, 60, 37, 72, 64, 59, 73, 76, 67]
const navRows = ref([
  { name: 'NC_PROGRAM', level: 0 },
  { name: '未用项', level: 1 },
  { name: 'PROGRAM', level: 2 },
  { op: 'opz', name: 'ZLEVEL_PR...', state: 'ok', tool: 'D6R0.5', speed: '0 rpm', first: true },
  { op: 'opz', name: 'ZLEVEL_PR...', state: 'ok', tool: 'D6R0.5', speed: '0 rpm' },
  { op: 'opc', name: 'CONTOUR...', state: 'ok', tool: 'D6R0.5', speed: '0 rpm' },
  { op: 'opz', name: 'ZLEVEL_PR...', state: 'ok', tool: 'D6R0.5', speed: '0 rpm' },
  { op: 'opz', name: 'ZLEVEL_PR...', state: 'bad', tool: 'D6R0.5', speed: '0 rpm', selected: true },
  ...Array.from({ length: 20 }, () => ({}))
])

const tasks = [
  { icon: 'cortana', label: 'Cortana' },
  { icon: 'snip', label: '截图工具' },
  { icon: 'calc', label: '计算器' },
  { icon: 'folder', label: '文件资源管理器', cls: 'running multi' },
  { icon: 'nx', label: 'NX', cls: 'active' },
  { icon: 'wechat', label: '微信', cls: 'running' }
]

const folds = ['在上一个范围之下切削', '信息', '预览']

const maxDist = ref('0.5000')
const zc = ref('26.0000')
const depth = ref('16.0000')
const perCut = ref('0.5000')
const zcFloat = ref('26.000000')
const current = ref(1)
const ranges = ref([
  { id: 1, depth: '16.000000', cut: '0.500000' },
  { id: 2, depth: '17.000000', cut: '0.500000' }
])

// 深度手柄上的刻度线
const hatch = (k) => {
  const t = k / 36
  const x = 993 + 15 * t
  const y = 468 + 104 * t
  return `M${x.toFixed(1)} ${y.toFixed(1)}l${(19 - 2 * t).toFixed(1)} -2`
}
</script>

<style>
html, body {
  margin: 0;
  height: 100%;
  overflow: hidden;
}
</style>

<style scoped>
.app {
  position: relative;
  display: flex;
  flex-direction: column;
  height: 100vh;
  overflow: hidden;
  background: #fdfdfd;
  color: #222;
  font: 15px/20px "Open Sans", "Noto Sans CJK SC", sans-serif;
}

.app * {
  box-sizing: border-box;
}

button, input, select {
  margin: 0;
  padding: 0;
  border: 0;
  background: none;
  color: inherit;
  font: inherit;
}

h1, h2, h3, h4 {
  margin: 0;
  font-weight: 400;
}

.ic-sm {
  flex: none;
  width: 18px;
  height: 18px;
}

.ic-lg {
  flex: none;
  width: 32px;
  height: 32px;
}

.arrow {
  flex: none;
  width: 8px;
  border: 4px solid transparent;
  border-top: 5px solid #222;
  border-bottom: 0;
}

.arrow.dim {
  border-top-color: #999;
}

.sep {
  flex: none;
  width: 1px;
  height: 22px;
  background: #ddd;
}

/* 标题栏 */
.title-bar {
  display: flex;
  align-items: center;
  justify-content: center;
  height: 30px;
  flex: none;
  padding-left: 284px;
}

.quick-tools {
  position: absolute;
  left: -2px;
  top: 4px;
  display: flex;
  align-items: center;
  gap: 6px;
}

.quick-edge {
  width: 6px;
  height: 14px;
  border-radius: 0 8px 8px 0;
  background: #ccc;
}

.q-icon {
  margin-right: -1px;
}

.quick-tools .arrow {
  margin: 0 2px;
}

.quick-tools .sep {
  margin: 0 1px;
}

.app-title {
  font-size: 15px;
}

/* 选项卡 */
.tabs {
  display: flex;
  flex: none;
  height: 32px;
  padding-left: 1px;
  background: #dadada;
}

.tab {
  width: 58px;
  padding-left: 9px;
  text-align: left;
  font-size: 16px;
  white-space: nowrap;
}

.tab.active {
  margin-left: -4px;
  width: 60px;
  padding-left: 13px;
  background: #fdfdfd;
  border-top: 1px solid #999;
  color: #17658a;
}

.tab-last {
  width: auto;
  margin-left: 331px;
  font-size: 15px;
}

/* 功能区 */
.ribbon {
  display: flex;
  flex: none;
  height: 106px;
  padding: 4px 0 1px 2px;
  border-bottom: 1px solid #ddd;
  font-size: 14px;
}

.group {
  flex: none;
  display: flex;
  flex-direction: column;
  border-left: 1px solid #ddd;
}

.g-show {
  width: 309px;
}

.g-shape {
  width: 405px;
}

.g-rel {
  width: 179px;
}

.g-add {
  width: 247px;
}

.g-more {
  width: 42px;
}

.g-measure {
  flex: 1;
}

.tools {
  display: flex;
  flex: 1;
  padding: 1px 0 0 7px;
}

.tools-end {
  justify-content: flex-end;
  padding-right: 1px;
}

.big {
  display: flex;
  flex-direction: column;
  align-items: center;
  gap: 5px;
  width: 64px;
  white-space: nowrap;
}

.big span {
  line-height: 20px;
}

.big-2 {
  width: 40px;
}

.big-4 {
  width: 66px;
}

.m-prop {
  width: 72px;
}

.m-item {
  width: 77px;
}

.small-col {
  display: flex;
  flex-direction: column;
  gap: 6px;
}

.tools-end .small-col {
  width: 87px;
}

.small {
  display: flex;
  align-items: center;
  gap: 5px;
  white-space: nowrap;
}

.small .ic-sm {
  width: 16px;
  height: 16px;
}

.tools-end {
  gap: 5px;
}

.g-rel .tools {
  gap: 4px;
  padding-left: 6px;
}

.g-add .tools {
  gap: 1px;
  padding-left: 7px;
}

button:disabled {
  color: #bdbdbd;
}

.caption {
  position: relative;
  display: flex;
  align-items: center;
  justify-content: center;
  height: 20px;
  color: #17607a;
}

.cap-end {
  justify-content: flex-end;
  gap: 75px;
  padding-right: 9px;
}

.cap-drop {
  padding-right: 22px;
}

.cap-arrow {
  position: absolute;
  right: 9px;
}

.more {
  display: flex;
  flex-direction: column;
  align-items: center;
  gap: 4px;
}

.more-box {
  display: flex;
  align-items: center;
  justify-content: center;
  width: 38px;
  height: 34px;
  border: 1px solid #ddd;
  border-radius: 3px;
}

/* 选择条 */
.toolbar {
  display: flex;
  align-items: center;
  flex: none;
  height: 36px;
  border-bottom: 1px solid #8b8f91;
}

.bar-left {
  display: flex;
  align-items: center;
  flex: none;
  width: 598px;
  padding-left: 2px;
}

.bar-left .sep {
  margin: 0 9px 0 4px;
}

.bar-left .sep:first-child {
  margin-left: 0;
}

.bar-right {
  display: flex;
  align-items: center;
}

.bar-right .sep {
  margin: 0 6px;
}

.b-icon {
  width: 25px;
  height: 22px;
  padding: 2px;
}

.b-icon.on {
  background: #cde5f3;
  border: 1px solid #9fc9e2;
  padding: 1px;
}

.sep.tall {
  height: 28px;
}

.drop {
  width: 14px;
  display: flex;
  justify-content: center;
}

.filter {
  appearance: none;
  width: 130px;
  height: 24px;
  padding-left: 2px;
  border: 1px solid #999;
  background: #fff;
}

/* 主区域 */
.main {
  display: flex;
  flex: 1;
  min-height: 0;
}

.navigator {
  display: flex;
  flex-direction: column;
  flex: none;
  width: 675px;
  padding-right: 10px;
  border-right: 1px solid #8b9598;
}

.nav-title {
  display: flex;
  align-items: center;
  justify-content: space-between;
  flex: none;
  height: 32px;
  padding-right: 6px;
  overflow: hidden;
}

.nav-name {
  margin-left: -52px;
  white-space: nowrap;
}

.nav-max {
  width: 14px;
  height: 13px;
  border: 2px solid #222;
}

.nav-table-wrap {
  flex: 1;
  min-height: 0;
  overflow: hidden;
  border-right: 1px solid #ccc;
}

.nav-table {
  width: 664px;
  table-layout: fixed;
  border-collapse: separate;
  border-spacing: 0;
}

.nav-table th {
  height: 25px;
  padding: 0 6px;
  background: #ededed;
  border: solid #d4d4d4;
  border-width: 1px 1px 1px 0;
  font-weight: 400;
  text-align: left;
}

.nav-table td {
  height: 24px;
  padding: 0 0 0 5px;
  border: solid #e2e2e2;
  border-width: 0 1px 1px 0;
  white-space: nowrap;
  overflow: hidden;
}

.nav-table tr:nth-child(even) td {
  background: #f8f8f8;
}

.nav-table td.name {
  padding: 0;
  border-right: 2px solid #111;
}

.nav-table .state {
  padding-left: 4px;
}

.nav-table .state svg {
  display: block;
  width: 15px;
  height: 15px;
}

.nav-table .first td {
  color: #7a4b9c;
}

.nav-table tr.selected td {
  background: #86bbcf;
  border-right-color: #c4dde7;
}

.nav-table tr.selected td.name {
  border-right-color: #111;
  background: linear-gradient(90deg, #fdfdfd 14px, #86bbcf 14px);
}

.lv0 {
  margin-left: -45px;
}

.lv1 {
  margin-left: -18px;
}

.op {
  display: flex;
  align-items: center;
  gap: 4px;
}

.op-icon {
  width: 18px;
  height: 18px;
  margin-left: -5px;
}

.h-scroll {
  display: flex;
  flex: none;
  height: 20px;
  background: #f0f0f0;
}

.thumb {
  flex: 1;
  background: #cacaca;
}

.h-arrow {
  width: 24px;
  height: 20px;
}

.splitter {
  flex: none;
  height: 6px;
  margin-top: 2px;
  background: #ddd;
  border: solid #a8a8a8;
  border-width: 1px 0;
}

.nav-fold {
  display: flex;
  align-items: center;
  justify-content: space-between;
  flex: none;
  height: 28px;
  padding-right: 4px;
  border-bottom: 2px solid #ccc;
  color: #17607a;
  overflow: hidden;
}

.nav-fold:last-child {
  margin-bottom: 6px;
}

.fold-name {
  margin-left: -42px;
}

.chev {
  width: 18px;
  height: 17px;
}

/* 图形窗口 */
.view {
  display: flex;
  flex-direction: column;
  flex: 1;
  min-width: 0;
}

.doc-bar {
  flex: none;
  display: flex;
  height: 27px;
  border-bottom: 2px solid #5392ab;
}

.doc-tab {
  display: flex;
  align-items: center;
  gap: 6px;
  padding: 0 6px;
  background: #4b98b8;
  color: #fff;
  white-space: nowrap;
}

.doc-tab .ic-sm {
  width: 15px;
  height: 15px;
}

.doc-close {
  color: #b9c4c8;
  font-size: 18px;
}

.canvas {
  position: relative;
  flex: 1;
  min-height: 0;
}

.scene {
  display: block;
  width: 100%;
  height: 100%;
}

.axis {
  font: 13px "Liberation Sans", sans-serif;
}

.float-input {
  position: absolute;
  left: 141px;
  top: 109px;
  display: flex;
  align-items: center;
  width: 198px;
  height: 34px;
  padding: 0 3px 0 2px;
  background: #f0f0f0;
  border: 1px solid #a5a5a5;
}

.float-input label {
  flex: 1;
  padding-left: 10px;
}

.float-input input {
  width: 82px;
  height: 27px;
  padding: 0 4px;
  border: 1px solid #888;
  background: #fff;
  font-size: 16px;
}

.grip {
  width: 7px;
  height: 27px;
  background: radial-gradient(circle, #888 1px, transparent 2px) 0 0 / 4px 4px;
}

.timer {
  position: absolute;
  right: -10px;
  bottom: 108px;
  display: flex;
  align-items: center;
  justify-content: center;
  width: 50px;
  height: 50px;
  border: 3px solid #cfc8ae;
  border-radius: 50%;
  background: radial-gradient(circle at 50% 150%, #7fae9c 36px, #5c86a4 38px);
  color: #d3dde0;
  font-size: 15px;
}

.key-hint {
  position: absolute;
  right: 6px;
  bottom: -24px;
  z-index: 2;
  width: 98px;
  height: 41px;
  border-radius: 4px 4px 0 0;
  background: rgba(96, 96, 96, .72);
  color: #cfcfcf;
  font: 300 40px/50px "Liberation Serif", "Noto Sans CJK SC", serif;
  text-align: center;
  overflow: hidden;
}

/* 状态栏 */
.status {
  display: flex;
  flex: none;
  height: 23px;
  align-items: center;
  padding-bottom: 2px;
  border-top: 1px solid #9a9fa1;
  font-size: 14px;
  font-weight: 700;
}

.status-left {
  width: 842px;
  margin-left: -21px;
}

/* 任务栏 */
.taskbar {
  display: flex;
  flex: none;
  height: 50px;
  align-items: center;
  background: #22343b;
  color: #fff;
  overflow: hidden;
}

.task-edge {
  width: 13px;
  height: 13px;
  margin-left: -10px;
  border: 2px solid #dfe4e6;
  border-radius: 50%;
}

.task {
  display: flex;
  align-items: center;
  justify-content: center;
  width: 62px;
  height: 50px;
  border-bottom: 3px solid transparent;
}

.task:nth-of-type(1) {
  margin-left: 20px;
}

.task svg {
  width: 29px;
  height: 29px;
}

.task.running {
  background: linear-gradient(#8fcde2, #8fcde2) center bottom / 51px 3px no-repeat border-box;
}

.task.active {
  background: #4c5a60;
  border-bottom-color: #8fcde2;
}

.tray {
  display: flex;
  align-items: center;
  margin-left: auto;
}

.tray-icon {
  width: 30px;
  height: 20px;
}

.ime {
  width: 34px;
  margin-left: -1px;
  font-size: 19px;
  text-align: center;
}

.pin {
  width: 18px;
  height: 19px;
  margin: 0 23px 0 10px;
  background: #fff;
  color: #111;
  font-size: 15px;
  line-height: 18px;
  text-align: center;
}

.clock {
  display: flex;
  flex-direction: column;
  width: 54px;
  overflow: hidden;
  white-space: nowrap;
}

.time {
  padding-left: 7px;
}

/* 水印 */
.brand {
  position: absolute;
  right: 0;
  top: 0;
  width: 324px;
  height: 170px;
  padding: 10px 0 0 46px;
  background: #fdfdfd;
  overflow: hidden;
}

.brand-dash {
  display: block;
  width: 66px;
  height: 2px;
  margin-left: 196px;
  background: repeating-linear-gradient(90deg, #5a9c98 0 6px, transparent 6px 9px);
}

.brand-row {
  display: flex;
  align-items: center;
  gap: 7px;
  height: 96px;
  margin-top: 9px;
}

.brand-logo {
  flex: none;
  width: 78px;
  height: 78px;
  border-radius: 50%;
}

.brand-name {
  color: #1d1715;
  font: 900 55px/60px "Noto Sans CJK SC", sans-serif;
  margin-bottom: 8px;
  white-space: nowrap;
}

.brand-tel {
  margin-left: 18px;
  color: #4685ab;
  font: 23px/52px "Noto Sans CJK SC", sans-serif;
  white-space: nowrap;
}

.brand-tel span {
  font: 22px "Liberation Sans", sans-serif;
}

/* 对话框 */
.dialog {
  position: absolute;
  left: 207px;
  top: 0;
  display: flex;
  flex-direction: column;
  gap: 3px;
  width: 380px;
  padding: 0 6px 10px 5px;
  background: #eee;
  border: 1px solid #d0d0d0;
  border-top: 0;
}

.dlg-title {
  display: flex;
  align-items: center;
  gap: 4px;
  height: 27px;
  margin: 0 -7px 0 -6px;
  padding: 0 7px;
  background: #4b98b8;
  color: #fff;
}

.dlg-title h2 {
  flex: 1;
  padding-left: 3px;
  font-size: 18px;
}

.dlg-title button, .pick, .add, .del {
  display: flex;
  align-items: center;
  justify-content: center;
}

.panel {
  padding: 0 8px 6px;
  background: #fdfdfd;
  border-bottom: 1px solid #c4c4c4;
}

.panel-head {
  display: flex;
  align-items: center;
  justify-content: space-between;
  height: 34px;
  padding-bottom: 4px;
  margin: 0 -4px 0 -1px;
}

.panel-head h3 {
  color: #17607a;
  font-size: 18px;
  white-space: nowrap;
}

.fold {
  padding-bottom: 0;
}

.fold .panel-head {
  height: 27px;
  padding: 0;
}

.row {
  display: flex;
  align-items: center;
  padding: 0 1px 0 1px;
}

.row label, .row > span:first-child {
  flex: 1;
}

.row-26 {
  height: 26px;
}

.row-28 {
  height: 28px;
}

.row-30 {
  height: 30px;
}

.row-34 {
  height: 34px;
}

.combo {
  position: relative;
  display: block;
  height: 28px;
}

.combo.wide {
  width: 152px;
}

.combo.unit {
  width: 71px;
  margin-left: 2px;
}

.combo select {
  appearance: none;
  display: block;
  width: 100%;
  height: 28px;
  padding-left: 5px;
  border: 1px solid #999;
  border-radius: 0;
  background: #fff;
}

.combo::after {
  content: "";
  position: absolute;
  right: 6px;
  top: 11px;
  border: 5px solid transparent;
  border-top: 6px solid #222;
  border-bottom: 0;
}

.with-icon select {
  padding-left: 25px;
}

.combo-icon {
  position: absolute;
  left: 5px;
  top: 6px;
  width: 16px;
  height: 16px;
}

.num {
  width: 90px;
  height: 26px;
  padding: 3px 5px;
  border: 1px solid #999;
  background: #fff;
  color: #333;
  font: 17px/18px "Liberation Mono", monospace;
  text-align: right;
}

.num.picked {
  padding: 2px 4px;
  background: linear-gradient(#0a6cd0, #0a6cd0) content-box, #fff;
  color: #e2f0ff;
}

.pick-row {
  gap: 2px;
  height: 33px;
}

.row > .pick-name {
  height: 32px;
  background: #fcdc72;
  line-height: 32px;
}

.pick {
  width: 32px;
  height: 32px;
  background: #fcdc72;
}

.pick.boxed {
  background: #fff;
  border: 1px solid #999;
}

.checked {
  display: flex;
  align-items: center;
  gap: 5px;
}

.checked svg {
  width: 14px;
  height: 14px;
}

.add {
  width: 24px;
  height: 24px;
  background: #6aaac2;
}

.list-box {
  margin: 1px 1px 2px;
  padding: 0 9px 8px 8px;
  height: 142px;
  background: #eee;
  border: 1px solid #d4d4d4;
}

.list-head {
  display: flex;
  align-items: center;
  justify-content: space-between;
  height: 32px;
  padding-bottom: 6px;
  margin-right: -4px;
}

.list-head h4 {
  color: #17607a;
  font-size: 15px;
}

.list-body {
  display: flex;
  align-items: flex-start;
  gap: 3px;
}

.list-frame {
  flex: none;
  width: 305px;
  height: 100px;
  padding: 1px 2px 1px 1px;
  background: #fff;
  border: 1px solid #ccc;
}

.list-table {
  width: 301px;
  table-layout: fixed;
  border-collapse: separate;
  border-spacing: 0;
}

.list-table th, .list-table td {
  height: 24px;
  padding: 0 0 0 4px;
  border: solid #dedede;
  border-width: 0 1px 1px 0;
  line-height: 20px;
  white-space: nowrap;
  text-align: left;
  font-weight: 400;
}

.list-table td {
  font-size: 16px;
}

.list-table th {
  padding-left: 6px;
  background: #ededed;
  width: 50px;
}

.list-table th:nth-child(2), .list-table th:nth-child(3) {
  width: 100px;
}

.list-table tr.selected td {
  background: #86bbcf;
}

.del {
  width: 24px;
  height: 24px;
  background: #f4f4f4;
  border: 1px solid #999;
}

.del svg {
  width: 15px;
  height: 15px;
}

.actions {
  display: flex;
  justify-content: flex-end;
  gap: 5px;
  padding: 8px 9px 0 0;
}

.actions button {
  width: 60px;
  height: 28px;
  background: #dcdcdc;
  border: 1px solid #a5a5a5;
}
</style>
